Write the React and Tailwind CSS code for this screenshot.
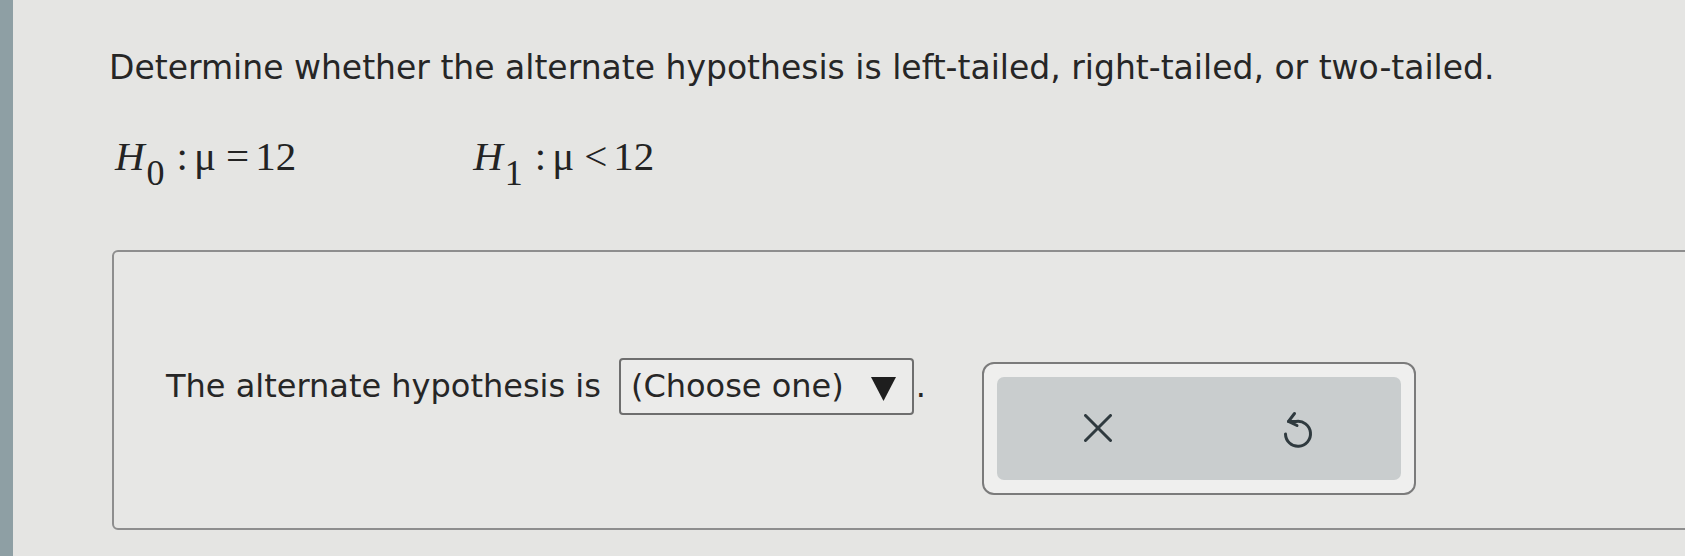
export default function App() {
  const serif = { fontFamily: '"Liberation Serif", "Times New Roman", serif' };

  return (
    <div
      className="flex h-[556px] w-full overflow-hidden bg-[#e5e5e3] text-[#262626]"
      style={{ fontFamily: '"DejaVu Sans", Verdana, sans-serif' }}
    >
      {/* left edge of the window */}
      <div className="w-[13px] shrink-0 bg-[#8e9fa4]" />

      <div className="flex-1 pl-[96px] pt-[48px]">
        <p className="text-[33px] leading-[39.6px] whitespace-nowrap">
          Determine whether the alternate hypothesis is left-tailed, right-tailed, or two-tailed.
        </p>

        {/* hypotheses */}
        <div className="mt-[48px] ml-[6px] flex items-baseline text-[41px] leading-[41px] text-[#232323]" style={serif}>
          <span className="italic">H</span>
          <span className="relative top-[15px] ml-[2px] text-[36px] leading-[36px]">0</span>
          <span className="ml-[12px]">:</span>
          <span className="ml-[6px]">μ</span>
          <span className="ml-[10px]">=</span>
          <span className="ml-[6px]">12</span>

          <span className="ml-[177px] italic">H</span>
          <span className="relative top-[15px] ml-[2px] text-[36px] leading-[36px]">1</span>
          <span className="ml-[12px]">:</span>
          <span className="ml-[6px]">μ</span>
          <span className="ml-[10px]">&lt;</span>
          <span className="ml-[6px]">12</span>
        </div>

        {/* answer panel */}
        <div className="mt-[73px] ml-[3px] h-[280px] w-[1640px] rounded-[6px] border-2 border-[#8e8e8e] bg-[#e7e7e5] pl-[52px] pt-[106px]">
          <div className="flex items-start">
            <div className="flex items-baseline text-[32px] leading-[38.4px]">
              <span className="whitespace-nowrap">The alternate hypothesis is</span>
              <div className="ml-[18px] inline-flex h-[57px] items-center rounded-[4px] border-2 border-[#6e6e6e] bg-[#ebebea] pl-[10px] pr-[16px]">
                <span className="whitespace-nowrap">(Choose one)</span>
                <svg className="ml-[27px] mt-[5px]" width="25" height="25" viewBox="0 0 25 25">
                  <polygon points="0,1 25,1 12.5,25" fill="#1e1e1e" />
                </svg>
              </div>
              <span className="ml-[2px]">.</span>
            </div>

            <div className="ml-[56px] mt-[4px] h-[133px] w-[434px] rounded-[12px] border-2 border-[#7b7b7b] bg-[#efefee] p-[13px]">
              <div className="flex h-full w-full items-center justify-center gap-[171px] rounded-[7px] bg-[#c9cdce]">
                <svg width="28" height="28" viewBox="0 0 28 28" fill="none" stroke="#2f3a3f" strokeWidth="3" strokeLinecap="round">
                  <line x1="1.5" y1="1.5" x2="26.5" y2="26.5" />
                  <line x1="26.5" y1="1.5" x2="1.5" y2="26.5" />
                </svg>
                <svg className="mt-[4px]" width="30" height="38" viewBox="14 13 30 38" fill="none" stroke="#2f3a3f" strokeWidth="3" strokeLinecap="round" strokeLinejoin="round">
                  <path d="M19.5 23.5 L27 23.5 A12.5 12.5 0 1 1 16.5 36" />
                  <path d="M25.5 15.5 L19.5 23.3 L28 27.5" />
                </svg>
              </div>
            </div>
          </div>
        </div>
      </div>
    </div>
  );
}
